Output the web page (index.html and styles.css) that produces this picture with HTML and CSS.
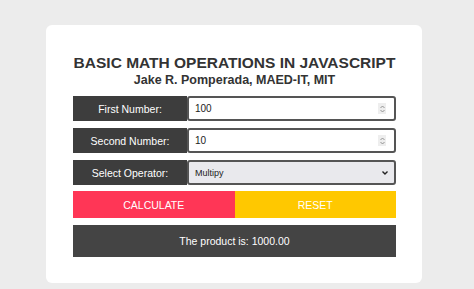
FILE: index.html
```html
<!DOCTYPE html>
<html>
<head>
<meta charset="utf-8">
<link rel="stylesheet" href="styles.css">
</head>
<body>
<div class="card">
  <h1 class="title">BASIC MATH OPERATIONS IN JAVASCRIPT</h1>
  <h2 class="subtitle">Jake R. Pomperada, MAED-IT, MIT</h2>
  <div class="row">
    <div class="label">First Number:</div>
    <div class="field"><span class="val">100</span><span class="spin"><svg width="7" height="10" viewBox="0 0 7 10"><path d="M1.5 4 L3.5 2 L5.5 4 M1.5 6 L3.5 8 L5.5 6" fill="none" stroke="#888" stroke-width="0.9"/></svg></span></div>
  </div>
  <div class="row">
    <div class="label">Second Number:</div>
    <div class="field"><span class="val">10</span><span class="spin"><svg width="7" height="10" viewBox="0 0 7 10"><path d="M1.5 4 L3.5 2 L5.5 4 M1.5 6 L3.5 8 L5.5 6" fill="none" stroke="#888" stroke-width="0.9"/></svg></span></div>
  </div>
  <div class="row">
    <div class="label">Select Operator:</div>
    <div class="field select"><span class="val">Multipy</span><svg class="chev" width="8" height="6" viewBox="0 0 8 6"><path d="M1.5 1.5 L4 4 L6.5 1.5" fill="none" stroke="#222" stroke-width="1.4"/></svg></div>
  </div>
  <div class="buttons">
    <div class="btn calc">CALCULATE</div>
    <div class="btn reset">RESET</div>
  </div>
  <div class="result">The product is: 1000.00</div>
</div>
</body>
</html>
```
FILE: styles.css
```css
html, body {
  margin: 0;
  padding: 0;
}
body {
  background: #ececec;
  font-family: "Liberation Sans", Arial, sans-serif;
  padding-top: 25px;
  height: 289px;
  box-sizing: border-box;
}
.card {
  width: 376px;
  margin-left: 46px;
  background: #fff;
  border-radius: 6px;
  box-sizing: border-box;
  padding: 28px 26px 27px 27px;
  height: 258px;
}
.title {
  margin: 0 -10px;
  font-size: 15.5px;
  font-weight: bold;
  color: #333;
  text-align: center;
  line-height: 19px;
  white-space: nowrap;
}
.subtitle {
  margin: 0 0 8px;
  font-size: 12.5px;
  font-weight: bold;
  color: #333;
  text-align: center;
  line-height: 16px;
}
.row {
  display: flex;
  height: 25px;
  margin-bottom: 7px;
}
.label {
  width: 114px;
  background: #3d3d3d;
  color: #fff;
  font-size: 10.5px;
  display: flex;
  align-items: center;
  justify-content: center;
}
.field {
  flex: 1;
  border: 2px solid #555;
  border-radius: 3px;
  display: flex;
  align-items: center;
  padding: 0 8px 0 6px;
  font-size: 10px;
  color: #222;
  background: #fff;
}
.field .val {
  flex: 1;
}
.spin {
  width: 8px;
  height: 11px;
  background: #eee;
  display: flex;
  align-items: center;
  justify-content: center;
}
.select {
  background: #e9e9ed;
  font-size: 9px;
  padding-right: 5px;
}
.buttons {
  display: flex;
  height: 27px;
  margin-top: -1px;
}
.btn {
  flex: 1;
  display: flex;
  align-items: center;
  justify-content: center;
  color: #fff;
  font-size: 10.5px;
}
.calc { background: #ff3656; }
.reset { background: #ffc800; }
.result {
  margin-top: 7px;
  height: 32px;
  background: #444;
  color: #fff;
  font-size: 10.5px;
  display: flex;
  align-items: center;
  justify-content: center;
}
```
